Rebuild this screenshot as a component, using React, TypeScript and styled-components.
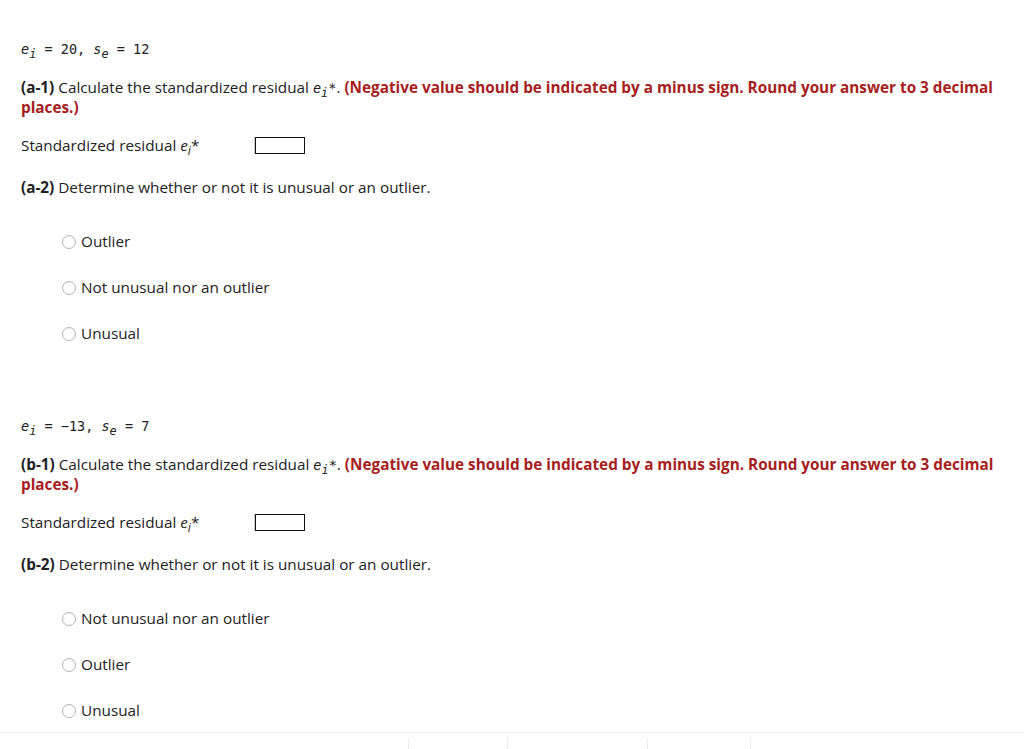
import React from 'react';
import styled, { createGlobalStyle } from 'styled-components';

const GlobalStyle = createGlobalStyle`
    html, body {
        margin: 0;
        padding: 0;
        background: #fff;
    }
    body {
        font-family: "Open Sans", Lato, Arial, sans-serif;
        color: #222;
    }
`;

const Page = styled.div`
    display: flex;
    flex-direction: column;
    width: 1024px;
    height: 749px;
    overflow: hidden;
`;

const Content = styled.div`
    display: flex;
    flex-direction: column;
    padding: 40px 21px 0 21px;
`;

const Part = styled.section<{ first?: boolean }>`
    display: flex;
    flex-direction: column;
    margin-top: ${({ first }) => (first ? '0' : '74px')};
`;

const Given = styled.div`
    font-family: "DejaVu Sans Mono", "Liberation Mono", monospace;
    font-size: 13.5px;
    line-height: 18px;
    color: #222;
    white-space: pre;
`;

const MathVar = styled.span`
    font-style: italic;
`;

const Sub = styled.sub`
    font-size: 12px;
    vertical-align: -4px;
    line-height: 0;
`;

const Question = styled.p<{ marginTop: number }>`
    margin: ${({ marginTop }) => marginTop}px 0 0 0;
    font-size: 15.3px;
    line-height: 19px;
`;

const Label = styled.b`
    font-weight: 700;
`;

const Hint = styled.b`
    font-weight: 700;
    color: #a61e1e;
`;

const InlineMono = styled.span`
    font-family: "DejaVu Sans Mono", "Liberation Mono", monospace;
    font-style: italic;
    font-size: 13.5px;
`;

const AnswerRow = styled.div`
    display: grid;
    grid-template-columns: 234px auto;
    align-items: center;
    margin-top: 19px;
    font-size: 15.3px;
    line-height: 19px;
`;

const AnswerBox = styled.div`
    width: 48px;
    height: 15px;
    border: 1px solid #111;
    box-shadow: -1px 0 0 #ccc;
`;

const Options = styled.div`
    display: flex;
    flex-direction: column;
    gap: 27px;
    margin-top: 35px;
    padding-left: 41px;
`;

const Option = styled.label`
    display: flex;
    align-items: center;
    gap: 5px;
    font-size: 15.3px;
    line-height: 19px;
`;

const Radio = styled.span`
    width: 12px;
    height: 12px;
    border-radius: 50%;
    border: 1px solid #b5b5b5;
    background: #fff;
    box-shadow: inset 0 1px 1px rgba(0, 0, 0, 0.05);
`;

const Footer = styled.div`
    display: flex;
    margin-top: auto;
    height: 11px;
    border-top: 1px solid #ececec;
    padding-top: 5px;
`;

const FooterCell = styled.div<{ width: number; divided?: boolean }>`
    width: ${({ width }) => width}px;
    border-left: ${({ divided }) => (divided ? '1px solid #ececec' : 'none')};
`;

type PartData = {
    letter: string;
    ei: string;
    se: string;
    options: string[];
};

const parts: PartData[] = [
    { letter: 'a', ei: '20', se: '12', options: ['Outlier', 'Not unusual nor an outlier', 'Unusual'] },
    { letter: 'b', ei: '−13', se: '7', options: ['Not unusual nor an outlier', 'Outlier', 'Unusual'] },
];

function QuestionPart({ data, first }: { data: PartData; first: boolean }) {
    return (
        <Part first={first}>
            <Given>
                <MathVar>e</MathVar><Sub><MathVar>i</MathVar></Sub>{' = '}{data.ei}{', '}
                <MathVar>s</MathVar><Sub><MathVar>e</MathVar></Sub>{' = '}{data.se}
            </Given>
            <Question marginTop={20}>
                <Label>({data.letter}-1)</Label> Calculate the standardized residual{' '}
                <InlineMono>e<Sub>i</Sub>*</InlineMono>.{' '}
                <Hint>(Negative value should be indicated by a minus sign. Round your answer to 3 decimal places.)</Hint>
            </Question>
            <AnswerRow>
                <span>
                    Standardized residual <i>e<Sub>i</Sub></i>*
                </span>
                <AnswerBox />
            </AnswerRow>
            <Question marginTop={23}>
                <Label>({data.letter}-2)</Label> Determine whether or not it is unusual or an outlier.
            </Question>
            <Options>
                {data.options.map((opt) => (
                    <Option key={opt}>
                        <Radio />
                        {opt}
                    </Option>
                ))}
            </Options>
        </Part>
    );
}

export default function App() {
    return (
        <Page>
            <GlobalStyle />
            <Content>
                {parts.map((p, i) => (
                    <QuestionPart key={p.letter} data={p} first={i === 0} />
                ))}
            </Content>
            <Footer>
                <FooterCell width={410} />
                <FooterCell width={98} divided />
                <FooterCell width={140} divided />
                <FooterCell width={102} divided />
                <FooterCell width={274} divided />
            </Footer>
        </Page>
    );
}
